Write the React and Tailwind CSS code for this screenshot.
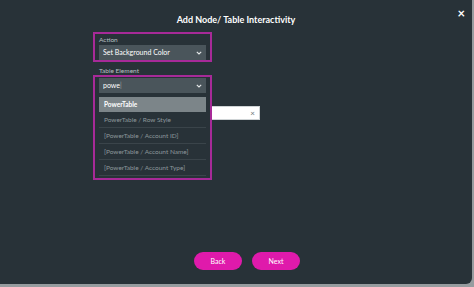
import React from 'react';

const items = [
  { label: 'PowerTable', active: true },
  { label: 'PowerTable / Row Style' },
  { label: '[PowerTable / Account ID]' },
  { label: '[PowerTable / Account Name]' },
  { label: '[PowerTable / Account Type]' },
];

const Chevron = () => (
  <svg width="6" height="4" viewBox="0 0 6 4" className="shrink-0">
    <path d="M0.8 0.8 L3 3 L5.2 0.8" stroke="#e6e9ea" strokeWidth="1.1" fill="none" />
  </svg>
);

const App = () => {
  return (
    <div
      className="relative w-[474px] h-[287px] overflow-hidden bg-[#969c9f]"
      style={{ fontFamily: 'Lato, "Open Sans", sans-serif' }}
    >
      <div className="relative w-[472px] h-[284px] bg-[#283238] rounded-br-[6px] flex flex-col">
        <header className="relative h-[30px] flex items-end justify-center pb-[6px]">
          <h1 className="text-[9px] font-bold text-white leading-none">Add Node/ Table Interactivity</h1>
          <span className="absolute right-[7px] top-[7px] text-white text-[13px] leading-none font-bold">×</span>
        </header>

        <div className="ml-[93px] w-[119px] flex flex-col">
          <div className="mt-[2px] border-2 border-[#a72a98] px-[4px] pt-[2px] pb-0">
            <div className="text-[6.5px] text-[#b9c0c3] leading-[8px]">Action</div>
            <div className="mt-[1px] h-[15px] bg-[#4a555b] flex items-center justify-between pl-[4px] pr-[4px]">
              <span className="text-[7px] text-white leading-none">Set Background Color</span>
              <Chevron />
            </div>
          </div>

          <div className="mt-[5px] ml-[6px] text-[6.5px] text-[#b9c0c3] leading-[8px]">Table Element</div>

          <div className="relative z-10 border-2 border-[#a72a98] px-[4px] pt-[1px] pb-[2px] bg-[#283238]">
            <div className="h-[15px] bg-[#4a555b] flex items-center justify-between pl-[4px] pr-[4px]">
              <span className="text-[7px] text-white leading-none">powe<span className="text-[#ccc] font-light">|</span></span>
              <Chevron />
            </div>
            <ul className="mt-[4px] flex flex-col">
              {items.map((it) => (
                <li
                  key={it.label}
                  className={
                    it.active
                      ? 'h-[15px] flex items-center pl-[5px] bg-[#7c8589] text-white text-[6.5px] font-bold'
                      : 'h-[16px] flex items-center pl-[5px] border-b border-[#3a444a] text-[#8d979b] text-[6.5px]'
                  }
                >
                  {it.label}
                </li>
              ))}
            </ul>
          </div>
        </div>

        <div className="absolute left-[210px] top-[106px] w-[50px] h-[14px] bg-white flex items-center justify-end pr-[4px] border border-[#cfd4d6]">
          <span className="text-[8px] text-[#6b7477] leading-none">×</span>
        </div>

        <div className="mt-auto mb-[14px] flex justify-center gap-[10px] pl-[22px]">
          <button className="w-[48px] h-[18px] rounded-full bg-[#df1aab] text-white text-[7px] leading-none">Back</button>
          <button className="w-[48px] h-[18px] rounded-full bg-[#df1aab] text-white text-[7px] leading-none">Next</button>
        </div>
      </div>
    </div>
  );
};

export default App;
